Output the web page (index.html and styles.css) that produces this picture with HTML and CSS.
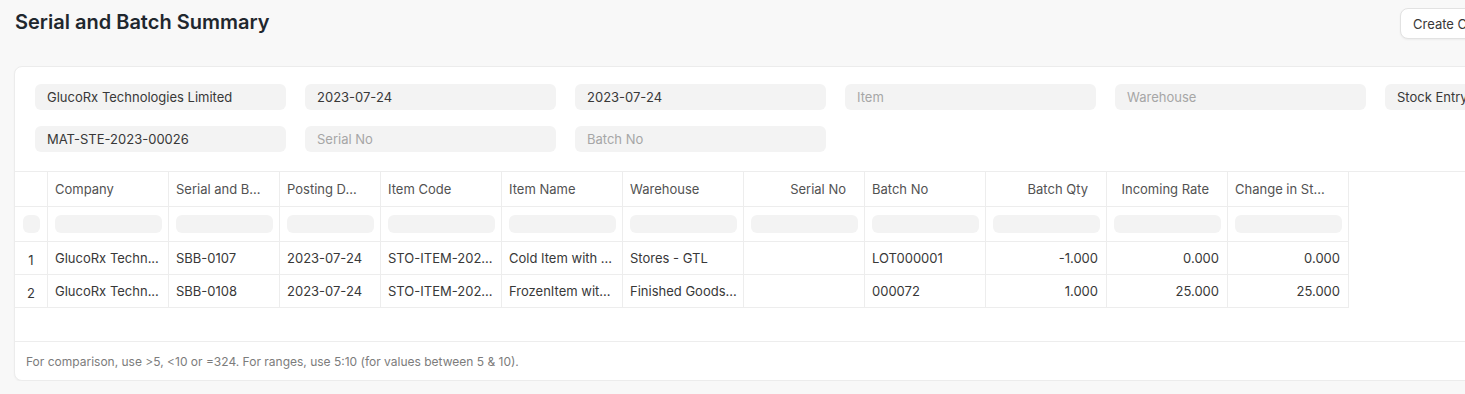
FILE: index.html
```html
<!DOCTYPE html>
<html lang="en">
<head>
    <meta charset="UTF-8">
    <meta name="viewport" content="width=device-width, initial-scale=1.0">
    <title>Serial and Batch Summary</title>
    <link rel="stylesheet" href="styles.css">
</head>
<body>
    <div class="page">
        <div class="page-head">
            <h1 class="page-title">Serial and Batch Summary</h1>
            <button class="btn">Create Card</button>
        </div>

        <div class="card">
            <div class="filters">
                <div class="field">GlucoRx Technologies Limited</div>
                <div class="field">2023-07-24</div>
                <div class="field">2023-07-24</div>
                <div class="field empty">Item</div>
                <div class="field empty">Warehouse</div>
                <div class="field">Stock Entry</div>
                <div class="field">MAT-STE-2023-00026</div>
                <div class="field empty">Serial No</div>
                <div class="field empty">Batch No</div>
            </div>

            <div class="datatable">
                <div class="dt-row dt-head">
                    <div class="cell idx"></div>
                    <div class="cell w121">Company</div>
                    <div class="cell w111">Serial and B...</div>
                    <div class="cell w101">Posting D...</div>
                    <div class="cell w121">Item Code</div>
                    <div class="cell w121">Item Name</div>
                    <div class="cell w121">Warehouse</div>
                    <div class="cell w121 right">Serial No</div>
                    <div class="cell w121">Batch No</div>
                    <div class="cell w121 right">Batch Qty</div>
                    <div class="cell w121 right">Incoming Rate</div>
                    <div class="cell w121">Change in St...</div>
                </div>
                <div class="dt-row dt-filter">
                    <div class="cell idx"><span class="box"></span></div>
                    <div class="cell w121"><span class="box"></span></div>
                    <div class="cell w111"><span class="box"></span></div>
                    <div class="cell w101"><span class="box"></span></div>
                    <div class="cell w121"><span class="box"></span></div>
                    <div class="cell w121"><span class="box"></span></div>
                    <div class="cell w121"><span class="box"></span></div>
                    <div class="cell w121"><span class="box"></span></div>
                    <div class="cell w121"><span class="box"></span></div>
                    <div class="cell w121"><span class="box"></span></div>
                    <div class="cell w121"><span class="box"></span></div>
                    <div class="cell w121"><span class="box"></span></div>
                </div>
                <div class="dt-row">
                    <div class="cell idx">1</div>
                    <div class="cell w121">GlucoRx Techn...</div>
                    <div class="cell w111">SBB-0107</div>
                    <div class="cell w101">2023-07-24</div>
                    <div class="cell w121">STO-ITEM-202...</div>
                    <div class="cell w121">Cold Item with ...</div>
                    <div class="cell w121">Stores - GTL</div>
                    <div class="cell w121"></div>
                    <div class="cell w121">LOT000001</div>
                    <div class="cell w121 num">-1.000</div>
                    <div class="cell w121 num">0.000</div>
                    <div class="cell w121 num">0.000</div>
                </div>
                <div class="dt-row">
                    <div class="cell idx">2</div>
                    <div class="cell w121">GlucoRx Techn...</div>
                    <div class="cell w111">SBB-0108</div>
                    <div class="cell w101">2023-07-24</div>
                    <div class="cell w121">STO-ITEM-202...</div>
                    <div class="cell w121">FrozenItem wit...</div>
                    <div class="cell w121">Finished Goods...</div>
                    <div class="cell w121"></div>
                    <div class="cell w121">000072</div>
                    <div class="cell w121 num">1.000</div>
                    <div class="cell w121 num">25.000</div>
                    <div class="cell w121 num">25.000</div>
                </div>
            </div>

            <div class="card-foot">
                For comparison, use &gt;5, &lt;10 or =324. For ranges, use 5:10 (for values between 5 &amp; 10).
            </div>
        </div>
    </div>
</body>
</html>
```

FILE: styles.css
```css
* {
    margin: 0;
    padding: 0;
    box-sizing: border-box;
}

html, body {
    overflow: hidden;
}

body {
    font-family: Inter, 'Noto Sans', sans-serif;
    font-size: 13px;
    color: #383838;
    background: #f8f8f8;
}

.page {
    width: 1514px;
    padding: 0 14px;
}

.page-head {
    display: flex;
    align-items: flex-start;
    justify-content: space-between;
    height: 48px;
    padding-top: 8px;
    margin-bottom: 18px;
}

.page-title {
    font-size: 20px;
    font-weight: 600;
    color: #1f272e;
    margin-left: 1px;
    line-height: 28px;
}

.btn {
    height: 31px;
    padding: 0 12px;
    background: white;
    border: 1px solid #e2e2e2;
    border-radius: 8px;
    font-family: inherit;
    font-size: 13px;
    color: #383838;
    box-shadow: 0 1px 2px rgba(0, 0, 0, 0.05);
}

.card {
    background: white;
    border: 1px solid #ececec;
    border-radius: 8px;
    box-shadow: 0 1px 2px rgba(0, 0, 0, 0.04);
    overflow: hidden;
}

.filters {
    display: grid;
    grid-template-columns: repeat(6, 251px);
    column-gap: 19px;
    row-gap: 16px;
    padding: 17px 19px 19px 20px;
}

.field {
    height: 26px;
    line-height: 26px;
    padding: 0 12px;
    background: #f3f3f3;
    border-radius: 6px;
    white-space: nowrap;
    overflow: hidden;
    color: #383838;
}

.field.empty {
    color: #a6a6a6;
}

.datatable {
    height: 170px;
    border-top: 1px solid #ededed;
}

.dt-row {
    display: flex;
    height: 33px;
}

.dt-head,
.dt-filter {
    height: 35px;
}

.dt-head {
    color: #525252;
}

.cell {
    display: flex;
    align-items: center;
    padding: 0 7px;
    border-right: 1px solid #ededed;
    border-bottom: 1px solid #ededed;
    white-space: nowrap;
    overflow: hidden;
}

.cell.idx {
    width: 33px;
    justify-content: center;
    padding: 4px 0 0;
    color: #383838;
}

.dt-head .cell.idx {
    padding: 0;
}

.w121 { width: 121px; }
.w111 { width: 111px; }
.w101 { width: 101px; }

.cell.right {
    justify-content: flex-end;
    padding-right: 18px;
}

.cell.num {
    justify-content: flex-end;
    padding-right: 8px;
}

.dt-filter .cell {
    padding: 0 6px 0 7px;
}

.dt-filter .cell.idx {
    padding: 0 7px 0 8px;
}

.box {
    display: block;
    width: 100%;
    height: 18px;
    background: #f3f3f3;
    border-radius: 6px;
}

.card-foot {
    height: 39px;
    line-height: 39px;
    padding-left: 11px;
    border-top: 1px solid #ededed;
    font-size: 12px;
    color: #7c7c7c;
}
```
